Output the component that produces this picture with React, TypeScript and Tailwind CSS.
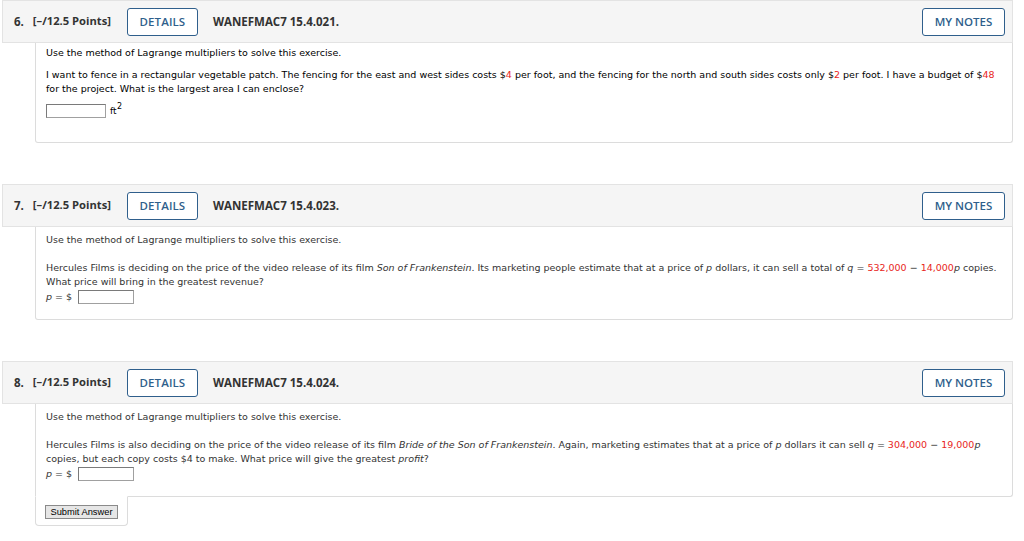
import React from "react";

const RED = "text-[#e8251b]";

function Header({ num, code }: { num: string; code: string }) {
  return (
    <div className="flex items-center h-[43px] w-[1011px] bg-[#f5f5f5] border border-[#e3e3e3] pl-[11px] pr-[7px] text-[#333] font-['Open_Sans',sans-serif]">
      <span className="text-[11.5px] font-bold">{num}</span>
      <span className="ml-[9px] text-[11.2px] font-bold">[–/12.5 Points]</span>
      <button className="ml-[16px] h-[28px] w-[71px] rounded-[3px] border-[1.5px] border-[#2f5f8c] text-[#2f5f8c] text-[11.5px] font-semibold bg-white tracking-[0.1px]">
        DETAILS
      </button>
      <span className="ml-[15px] text-[11.5px] font-bold">{code}</span>
      <button className="ml-auto h-[28px] w-[83px] rounded-[3px] border-[1.5px] border-[#2f5f8c] text-[#2f5f8c] text-[11.5px] font-semibold bg-white">
        MY NOTES
      </button>
    </div>
  );
}

function Input({ w }: { w: string }) {
  return (
    <span
      className={`inline-block h-[14px] ${w} border border-[#a0a0a0] border-t-[#7a7a7a] border-l-[#7a7a7a] bg-white align-middle`}
    />
  );
}

const body = "font-['DejaVu_Sans',Verdana,sans-serif] text-[9.5px] leading-[14px]";

export default function App() {
  return (
    <div className="bg-white w-[1024px] h-[541px] overflow-hidden pl-[2px]">
      {/* Q6 */}
      <Header num="6." code="WANEFMAC7 15.4.021." />
      <div className={`ml-[33px] w-[978px] border-x border-b border-[#dcdcdc] rounded-b-[3px] pl-[10px] pt-[3px] pb-[24px] text-black ${body}`}>
        <div className="whitespace-nowrap">Use the method of Lagrange multipliers to solve this exercise.</div>
        <div className="mt-[8px] whitespace-nowrap">
          I want to fence in a rectangular vegetable patch. The fencing for the east and west sides costs $
          <span className={RED}>4</span> per foot, and the fencing for the north and south sides costs only $
          <span className={RED}>2</span> per foot. I have a budget of $<span className={RED}>48</span>
        </div>
        <div className="whitespace-nowrap">for the project. What is the largest area I can enclose?</div>
        <div className="mt-[8px] flex items-center h-[14px]">
          <Input w="w-[60px]" />
          <span className="ml-[4px] text-[9px] leading-[14px] relative pr-[5px]">
            ft<span className="absolute -top-[4px] left-[7px] text-[8px]">2</span>
          </span>
        </div>
      </div>

      {/* Q7 */}
      <div className="mt-[41px]">
        <Header num="7." code="WANEFMAC7 15.4.023." />
        <div className={`ml-[33px] w-[978px] border-x border-b border-[#dcdcdc] rounded-b-[3px] pl-[10px] pt-[6px] pb-[14px] text-[#333] ${body}`}>
          <div className="whitespace-nowrap">Use the method of Lagrange multipliers to solve this exercise.</div>
          <div className="mt-[14px] whitespace-nowrap">
            Hercules Films is deciding on the price of the video release of its film <i>Son of Frankenstein</i>. Its
            marketing people estimate that at a price of <i>p</i> dollars, it can sell a total of <i>q</i> ={" "}
            <span className={RED}>532,000</span> − <span className={RED}>14,000</span>
            <i>p</i> copies.
          </div>
          <div className="whitespace-nowrap">What price will bring in the greatest revenue?</div>
          <div className="flex items-center h-[16px] whitespace-nowrap">
            <i>p</i>&nbsp;=&nbsp;$
            <span className="ml-[6px] flex">
              <Input w="w-[56px]" />
            </span>
          </div>
        </div>
      </div>

      {/* Q8 */}
      <div className="mt-[41px]">
        <Header num="8." code="WANEFMAC7 15.4.024." />
        <div className={`ml-[33px] w-[978px] border-x border-b border-[#dcdcdc] rounded-br-[3px] pl-[10px] pt-[6px] pb-[14px] text-[#333] ${body}`}>
          <div className="whitespace-nowrap">Use the method of Lagrange multipliers to solve this exercise.</div>
          <div className="mt-[14px] whitespace-nowrap">
            Hercules Films is also deciding on the price of the video release of its film{" "}
            <i>Bride of the Son of Frankenstein</i>. Again, marketing estimates that at a price of <i>p</i> dollars it
            can sell <i>q</i> = <span className={RED}>304,000</span> − <span className={RED}>19,000</span>
            <i>p</i>
          </div>
          <div className="whitespace-nowrap">
            copies, but each copy costs $4 to make. What price will give the greatest <i>profit</i>?
          </div>
          <div className="flex items-center h-[16px] whitespace-nowrap">
            <i>p</i>&nbsp;=&nbsp;$
            <span className="ml-[6px] flex">
              <Input w="w-[56px]" />
            </span>
          </div>
        </div>
        <div className="ml-[33px] -mt-px w-[93px] h-[30px] border border-t-white border-[#dcdcdc] rounded-b-[4px] bg-white pl-[9px] pt-[8px]">
          <button className="h-[14px] w-[73px] bg-[#e6e6e6] border border-[#8a8a8a] text-[9.3px] leading-[12px] text-black font-['Liberation_Sans',Arial,sans-serif] flex items-center justify-center">
            Submit Answer
          </button>
        </div>
      </div>
    </div>
  );
}
